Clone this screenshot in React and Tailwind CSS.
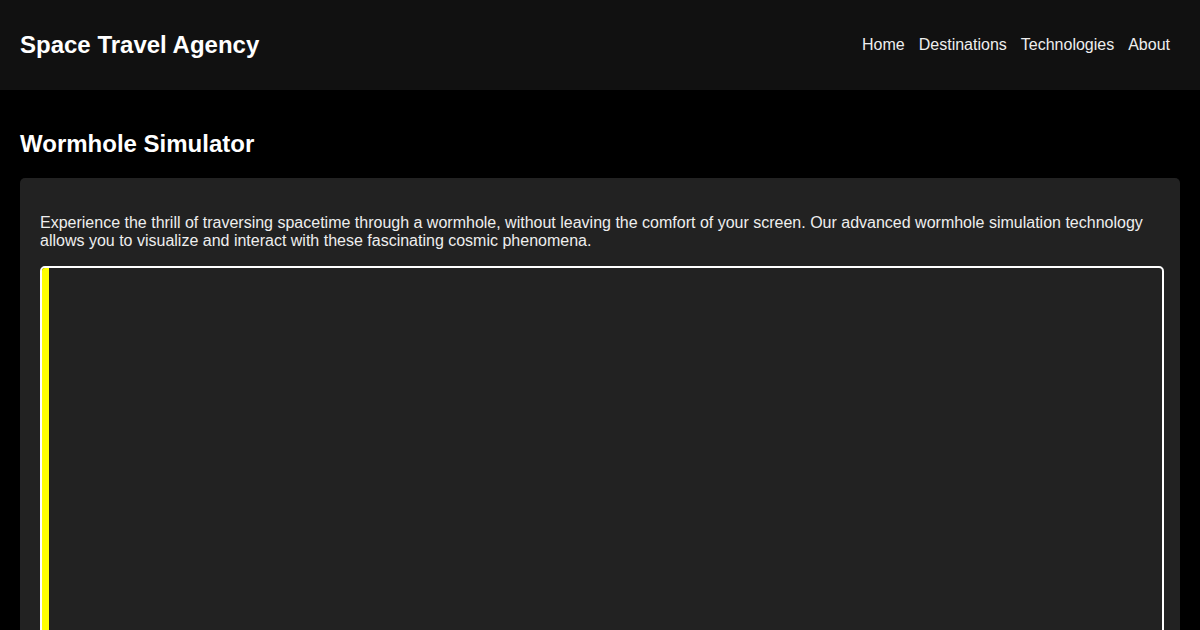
export default function App() {
  return (
    <div className="min-h-screen bg-black text-white font-['Liberation_Sans',Arial,sans-serif]">
      {/* Header */}
      <header className="h-[90px] bg-[#111] flex items-center justify-between pl-5 pr-[30px]">
        <h1 className="text-2xl font-bold">Space Travel Agency</h1>
        <nav className="flex gap-[14px] text-base text-[#eee]">
          <a>Home</a>
          <a>Destinations</a>
          <a>Technologies</a>
          <a>About</a>
        </nav>
      </header>

      {/* Main */}
      <main className="px-5 pt-[40px]">
        <h2 className="text-2xl font-bold leading-7 mb-[20px]">Wormhole Simulator</h2>
        <section className="bg-[#222] rounded-[5px] p-5">
          <p className="mt-4 mb-4 text-base leading-[18px] text-[#eee]">
            Experience the thrill of traversing spacetime through a wormhole, without leaving the comfort of your screen. Our advanced wormhole simulation technology allows you to visualize and interact with these fascinating cosmic phenomena.
          </p>
          <div className="w-[1124px] h-[500px] border-2 border-white rounded-[5px] overflow-hidden flex">
            <div className="w-[7px] h-full bg-[#ffff00]" />
          </div>
        </section>
      </main>
    </div>
  );
}
